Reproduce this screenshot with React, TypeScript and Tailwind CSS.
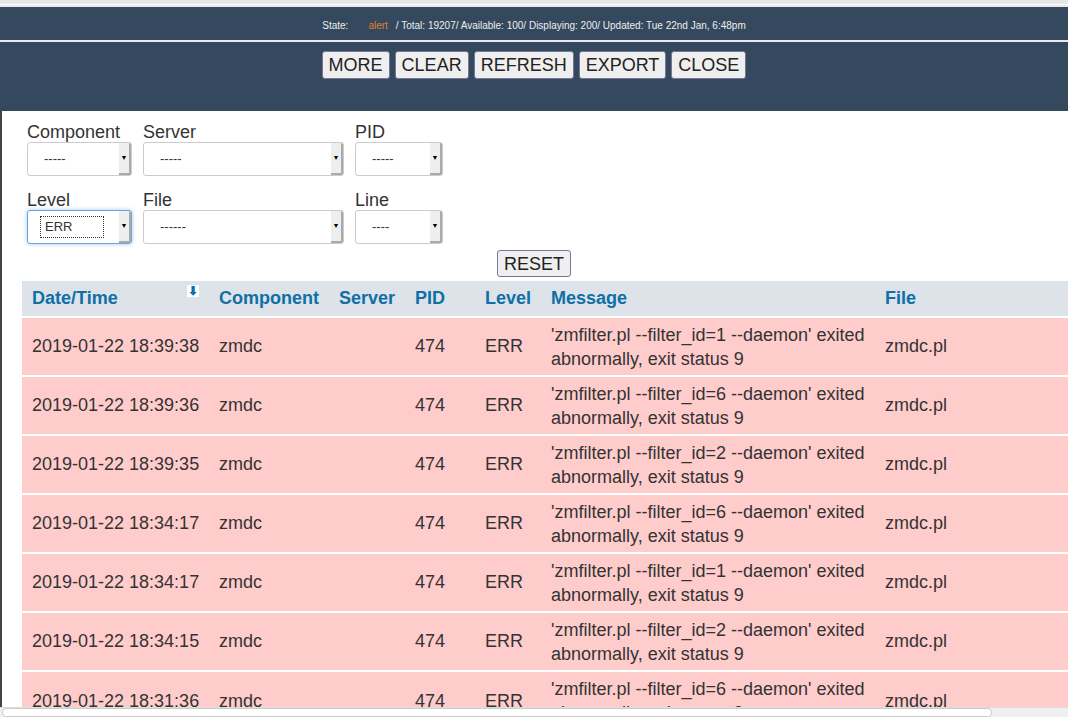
import React from 'react';

const rows = [
  ['2019-01-22 18:39:38', '1'],
  ['2019-01-22 18:39:36', '6'],
  ['2019-01-22 18:39:35', '2'],
  ['2019-01-22 18:34:17', '6'],
  ['2019-01-22 18:34:17', '1'],
  ['2019-01-22 18:34:15', '2'],
  ['2019-01-22 18:31:36', '6'],
];

function Sel({ w, v, focus }: { w: string; v: string; focus?: boolean }) {
  return (
    <div className={`${w} h-[34px] flex bg-white rounded-[3px] border ${focus ? 'border-[#6aa7e0] shadow-[0_0_4px_#9cc8f0]' : 'border-[#ccc]'} overflow-hidden`}>
      <div className="flex-1 flex items-center pl-3 text-[13px] text-[#333]">
        {focus ? <span className="border border-dotted border-[#333] px-1 w-[64px] leading-[20px]">{v}</span> : <span className="pl-1">{v}</span>}
      </div>
      <div className="w-[12px] bg-[#eee] flex items-center justify-center border-r-2 border-b-2 border-[#aaa]">
        <span className="text-[7px] text-black">▼</span>
      </div>
    </div>
  );
}

function Btn({ t }: { t: string }) {
  return <button className="h-[28px] px-[6px] bg-[#efefef] border border-[#767699] rounded-[3px] text-[18px] text-[#222]">{t}</button>;
}

export default function App() {
  return (
    <div className="w-[1068px] h-[717px] overflow-hidden bg-white relative" style={{ fontFamily: '"Liberation Sans", Arial, sans-serif' }}>
      <div className="h-[4px] bg-[#e6e6e6]" />
      <div className="bg-[#34495e] h-[106px]">
        <div className="h-[2px] bg-[#e9e9e9] mt-[1px]" />
        <div className="h-[33px] pt-[4px] flex items-center justify-center text-[10px] text-[#eee]">
          <span>State:</span>
          <span className="text-[#e67e22] ml-[20px]">alert</span>
          <span className="ml-[8px]">/ Total: 19207/ Available: 100/ Displaying: 200/ Updated: Tue 22nd Jan, 6:48pm</span>
        </div>
        <div className="h-[2px] bg-[#e9e9e9]" />
        <div className="flex justify-center gap-[5px] mt-[9px]">
          {['MORE', 'CLEAR', 'REFRESH', 'EXPORT', 'CLOSE'].map((t) => <Btn key={t} t={t} />)}
        </div>
      </div>
      <div className="border-l-2 border-[#444] h-[607px]">
        <div className="pl-[25px] pt-[11px] text-[18px] text-[#333]">
          <div className="flex gap-[11px]">
            <div><div className="leading-[20px]">Component</div><Sel w="w-[105px]" v="-----" /></div>
            <div><div className="leading-[20px]">Server</div><Sel w="w-[201px]" v="-----" /></div>
            <div><div className="leading-[20px]">PID</div><Sel w="w-[88px]" v="-----" /></div>
          </div>
          <div className="flex gap-[11px] mt-[14px]">
            <div><div className="leading-[20px]">Level</div><Sel w="w-[105px]" v="ERR" focus /></div>
            <div><div className="leading-[20px]">File</div><Sel w="w-[201px]" v="------" /></div>
            <div><div className="leading-[20px]">Line</div><Sel w="w-[88px]" v="----" /></div>
          </div>
        </div>
        <div className="flex pl-[495px] mt-[6px]">
          <button className="h-[27px] px-[6px] bg-[#efefef] border border-[#767699] rounded-[3px] text-[18px] text-[#222]">RESET</button>
        </div>
        <table className="ml-[20px] mt-[4px] w-[1060px] table-fixed border-collapse text-[18px] text-[#333]">
          <colgroup>
            <col className="w-[187px]" /><col className="w-[120px]" /><col className="w-[76px]" /><col className="w-[70px]" />
            <col className="w-[66px]" /><col className="w-[334px]" /><col />
          </colgroup>
          <thead>
            <tr className="bg-[#dde3e9] h-[36px] text-[#0f6fa6] font-bold text-left">
              <th className="pl-[10px] relative">Date/Time<span className="absolute right-[10px] top-[4px] text-[12px] bg-white leading-[12px] px-[1px]">⬇</span></th>
              <th className="pl-[10px]">Component</th>
              <th className="pl-[10px]">Server</th>
              <th className="pl-[10px]">PID</th>
              <th className="pl-[10px]">Level</th>
              <th className="pl-[10px]">Message</th>
              <th className="pl-[10px]">File</th>
            </tr>
          </thead>
          <tbody>
            {rows.map(([d, id], i) => (
              <tr key={i} className="bg-[#ffcccc] h-[59px] border-t-2 border-white">
                <td className="pl-[10px]">{d}</td>
                <td className="pl-[10px]">zmdc</td>
                <td className="pl-[10px]"></td>
                <td className="pl-[10px]">474</td>
                <td className="pl-[10px]">ERR</td>
                <td className="pl-[10px] leading-[24px]">'zmfilter.pl --filter_id={id} --daemon' exited abnormally, exit status 9</td>
                <td className="pl-[10px]">zmdc.pl</td>
              </tr>
            ))}
          </tbody>
        </table>
      </div>
      <div className="absolute left-0 right-0 bottom-0 h-[10px] bg-[#f0f0f0] border-t border-[#ddd]">
        <div className="ml-[2px] w-[990px] h-full bg-white rounded-[4px] border border-[#ccc]" />
      </div>
    </div>
  );
}
